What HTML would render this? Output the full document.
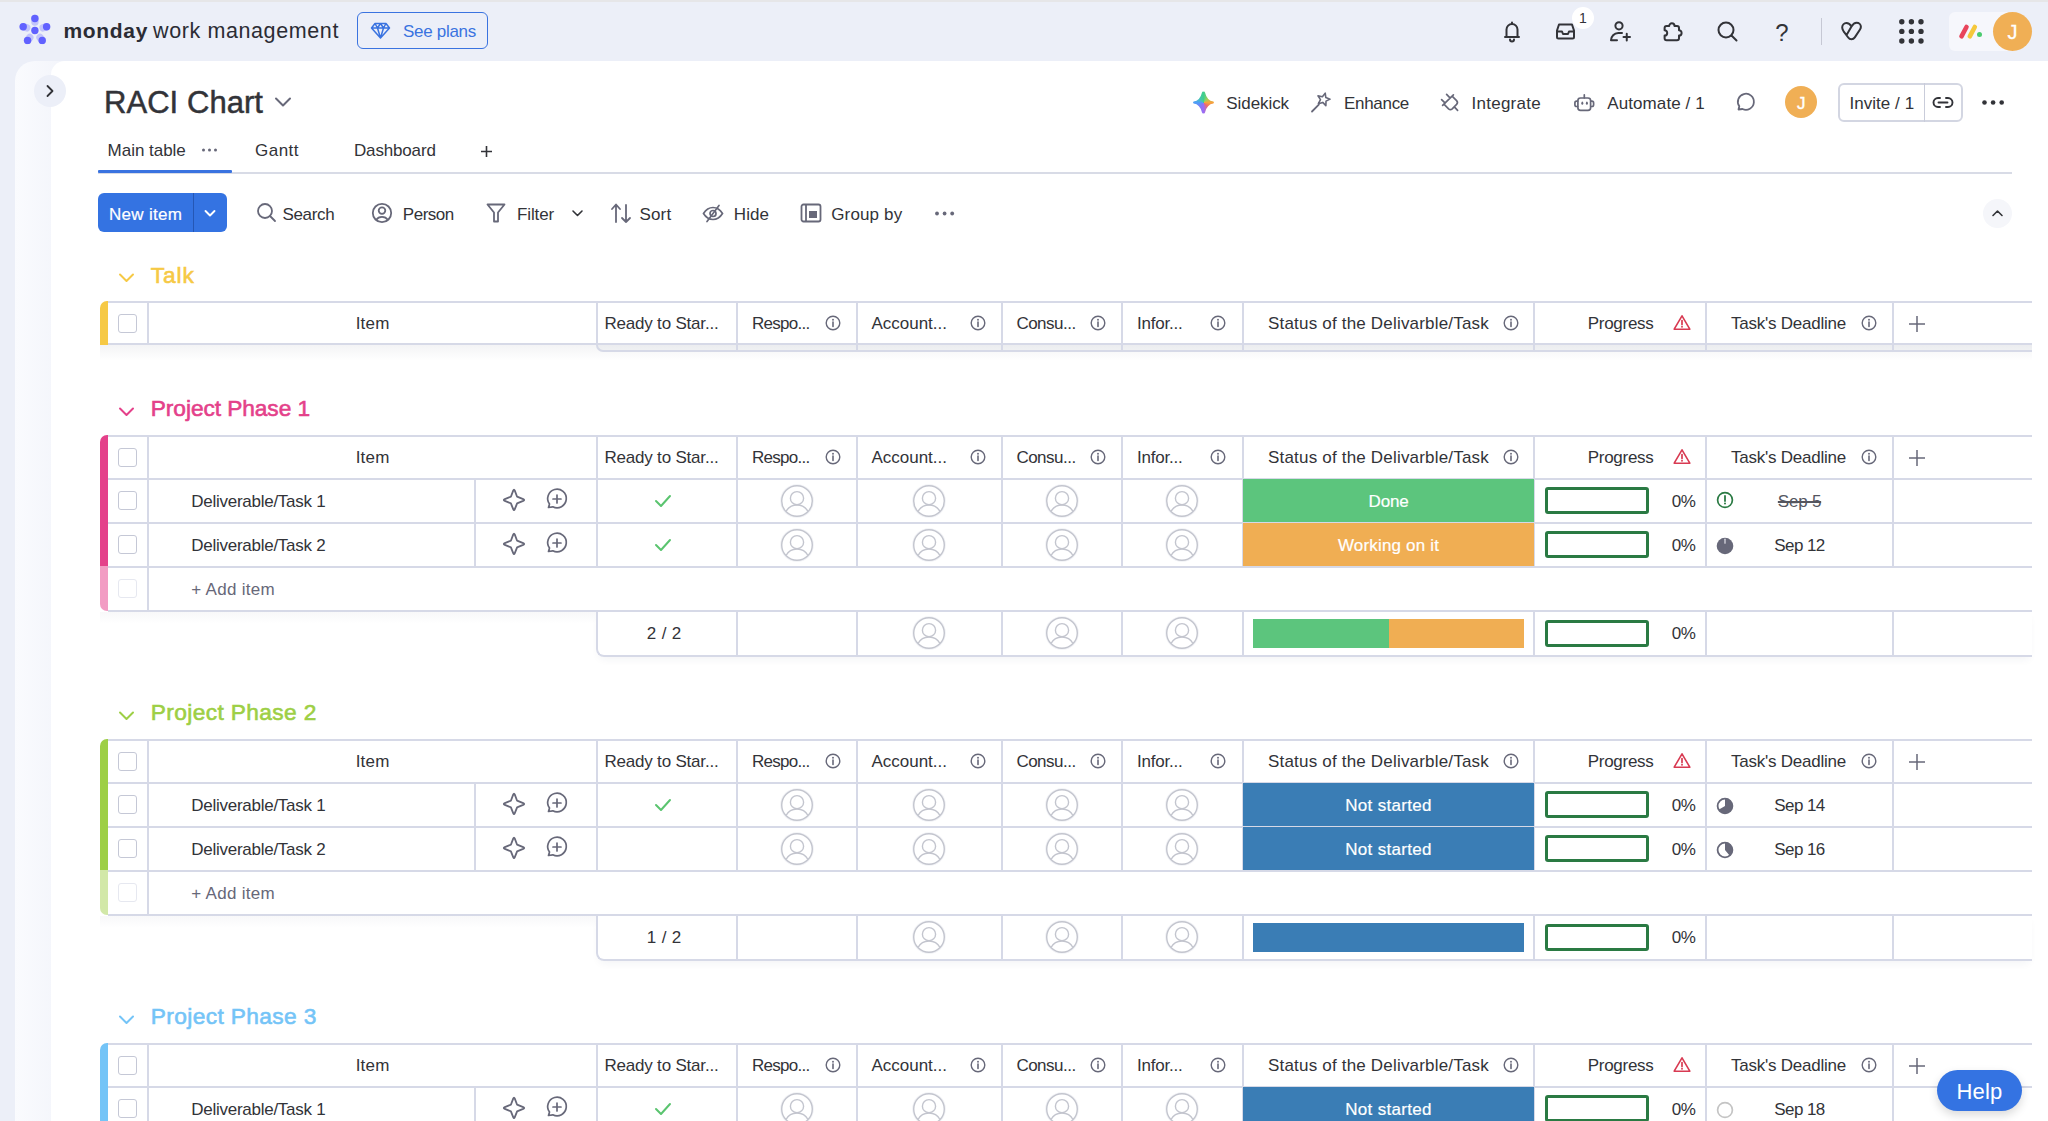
<!DOCTYPE html>
<html><head><meta charset="utf-8"><title>RACI Chart</title>
<style>
html,body{margin:0;padding:0}
body{width:2048px;height:1121px;overflow:hidden;position:relative;background:#ECEFF8;font-family:"Liberation Sans", sans-serif}
.a{position:absolute}
.t{position:absolute;white-space:pre;line-height:1}
svg.a{overflow:visible}
</style></head><body>
<div class="a" style="left:0px;top:0px;width:2048px;height:2px;background:#E6E6E8"></div>
<svg class="a" style="left:0;top:0" width="60" height="60" viewBox="0 0 60 60"><line x1="34.9" y1="18.5" x2="34.90" y2="22.10" stroke="#6161FF" stroke-opacity="0.3" stroke-width="7.4" stroke-linecap="round"/><line x1="23.2" y1="26.7" x2="26.71" y2="27.84" stroke="#6161FF" stroke-opacity="0.3" stroke-width="7.4" stroke-linecap="round"/><line x1="46.6" y1="26.7" x2="43.09" y2="27.84" stroke="#6161FF" stroke-opacity="0.3" stroke-width="7.4" stroke-linecap="round"/><line x1="27.6" y1="40.4" x2="29.79" y2="37.43" stroke="#6161FF" stroke-opacity="0.3" stroke-width="7.4" stroke-linecap="round"/><line x1="42.2" y1="40.4" x2="40.01" y2="37.43" stroke="#6161FF" stroke-opacity="0.3" stroke-width="7.4" stroke-linecap="round"/><circle cx="34.9" cy="18.5" r="3.7" fill="#6161FF"/><circle cx="23.2" cy="26.7" r="3.7" fill="#6161FF"/><circle cx="46.6" cy="26.7" r="3.7" fill="#6161FF"/><circle cx="27.6" cy="40.4" r="3.7" fill="#6161FF"/><circle cx="42.2" cy="40.4" r="3.7" fill="#6161FF"/><circle cx="34.9" cy="30.5" r="3.7" fill="#6161FF"/></svg>
<span class="t" style="left:63.50px;top:20.30px;font-size:21px;font-weight:700;color:#2B2C34;letter-spacing:0.664px;">monday</span>
<span class="t" style="left:153.00px;top:21.30px;font-size:21.5px;color:#2B2C34;letter-spacing:0.608px;">work management</span>
<div class="a" style="left:357px;top:12px;width:131px;height:37px;border:1.5px solid #3A73E0;border-radius:6px;box-sizing:border-box"></div>
<svg class="a" style="left:370px;top:21px;" width="21" height="19" viewBox="0 0 21 19" fill="none"><path d="M5 2.5h11l3.5 4.5L10.5 17 1.5 7z M1.5 7h18 M7.5 7l3 10 3-10 M5 2.5l2.5 4.5 3-4.5 3 4.5 2.5-4.5" stroke="#3A73E0" stroke-width="1.5" stroke-linejoin="round"/></svg>
<span class="t" style="left:403.00px;top:22.70px;font-size:17px;color:#3A73E0;letter-spacing:-0.292px;">See plans</span>
<svg class="a" style="left:1502px;top:20px;" width="20" height="22" viewBox="0 0 20 22" fill="none"><path d="M3 17h14M4.5 17V9.5a5.5 5.5 0 0 1 11 0V17M8 19.5a2 2 0 0 0 4 0M10 2.5v1.5" stroke="#323338" stroke-width="2" stroke-linecap="round" stroke-linejoin="round"/></svg>
<svg class="a" style="left:1554px;top:22px;" width="24" height="19" viewBox="0 0 24 19" fill="none"><path d="M3 8.5l2-6h13l2 6v6.5a1.5 1.5 0 0 1-1.5 1.5h-14A1.5 1.5 0 0 1 3 15z M3 9.5h5l1 2.5h5l1-2.5h5" stroke="#323338" stroke-width="2" stroke-linejoin="round"/></svg>
<div class="a" style="left:1572px;top:7px;width:22px;height:22px;background:#fff;border-radius:50%"></div>
<span class="t" style="left:1579.10px;top:11.00px;font-size:14px;color:#323338;">1</span>
<svg class="a" style="left:1608px;top:20px;" width="24" height="22" viewBox="0 0 24 22" fill="none"><circle cx="11" cy="5.8" r="3.6" stroke="#323338" stroke-width="2"/><path d="M14 13H10.2A7.3 7.3 0 0 0 3 20.3H9M15.5 17h6.5M18.75 13.8v6.6" stroke="#323338" stroke-width="2" stroke-linecap="round" stroke-linejoin="round"/></svg>
<svg class="a" style="left:1658px;top:16px;" width="30" height="30" viewBox="0 0 30 30" fill="none"><path d="M8.6 10H11.2A2.65 2.65 0 0 1 16.5 10H19Q21 10 21 12V14.3A2.6 2.6 0 0 1 21 19.5V22.3Q21 24.3 19 24.3H8.6Q6.6 24.3 6.6 22.3V19.5A2.6 2.6 0 0 0 6.6 14.3V12Q6.6 10 8.6 10Z" stroke="#323338" stroke-width="2" stroke-linejoin="round"/></svg>
<svg class="a" style="left:1716px;top:20px;" width="24" height="24" viewBox="0 0 24 24" fill="none"><circle cx="10" cy="10" r="7.5" stroke="#323338" stroke-width="2"/><path d="M15.5 15.5l5 5" stroke="#323338" stroke-width="2" stroke-linecap="round"/></svg>
<span class="t" style="left:1775.32px;top:20.50px;font-size:24px;color:#323338;">?</span>
<div class="a" style="left:1821px;top:18px;width:1px;height:27px;background:#C6C8D4"></div>
<svg class="a" style="left:1836px;top:16px;" width="30" height="30" viewBox="0 0 30 30" fill="none"><path d="M15.5 10.6C14 8 12.3 7 10.4 7 8 7 6.2 9 6.2 11.5 6.2 12.8 6.8 14 7.6 15.3L12.2 21.5C13 22.7 14.2 23.3 15.5 23.3 16.9 23.3 18 22.6 18.8 21.4L24 13.5C24.6 12.6 24.9 11.6 24.9 10.8 24.9 8.5 23 6.7 20.6 6.7 18.6 6.7 17 8 15.5 10.6L11 18.2" stroke="#323338" stroke-width="2" stroke-linecap="round" stroke-linejoin="round"/></svg>
<svg class="a" style="left:1899px;top:19px;" width="26" height="26" viewBox="0 0 26 26" fill="none"><circle cx="2.8" cy="2.8" r="2.7" fill="#323338"/><circle cx="2.8" cy="12.4" r="2.7" fill="#323338"/><circle cx="2.8" cy="22.0" r="2.7" fill="#323338"/><circle cx="12.4" cy="2.8" r="2.7" fill="#323338"/><circle cx="12.4" cy="12.4" r="2.7" fill="#323338"/><circle cx="12.4" cy="22.0" r="2.7" fill="#323338"/><circle cx="22.0" cy="2.8" r="2.7" fill="#323338"/><circle cx="22.0" cy="12.4" r="2.7" fill="#323338"/><circle cx="22.0" cy="22.0" r="2.7" fill="#323338"/></svg>
<div class="a" style="left:1949px;top:12px;width:70px;height:39px;background:#F6F7FC;border-radius:6px"></div>
<svg class="a" style="left:1957px;top:22px;" width="28" height="18" viewBox="0 0 28 18" fill="none"><path d="M4.5 14.3L9.5 5" stroke="#E8455C" stroke-width="4.6" stroke-linecap="round"/><path d="M12.8 14.3L17.8 5" stroke="#F5C83C" stroke-width="4.6" stroke-linecap="round"/><circle cx="22.5" cy="12.5" r="2.5" fill="#4ACB6E"/></svg>
<div class="a" style="left:1993px;top:12px;width:39px;height:39px;background:#F0AF55;border-radius:50%"></div>
<span class="t" style="left:2007.50px;top:21.50px;font-size:20px;color:#fff;-webkit-text-stroke:0.3px #fff;">J</span>
<div class="a" style="left:15px;top:61px;width:60px;height:1060px;background:linear-gradient(90deg,#FAFBFE,#F1F3FA);border-top-left-radius:20px"></div>
<div class="a" style="left:51px;top:61px;width:1997px;height:1060px;background:#fff;border-top-left-radius:14px"></div>
<div class="a" style="left:34px;top:75px;width:32px;height:32px;background:#ECEFF8;border-radius:50%"></div>
<svg class="a" style="left:44px;top:84px;" width="12" height="14" viewBox="0 0 12 14" fill="none"><path d="M3.5 2l5 5-5 5" stroke="#323338" stroke-width="1.8" stroke-linecap="round" stroke-linejoin="round"/></svg>
<span class="t" style="left:104.00px;top:86.80px;font-size:31px;color:#323338;letter-spacing:0.052px;-webkit-text-stroke:0.5px #323338;">RACI Chart</span>
<svg class="a" style="left:274px;top:96px;" width="18" height="12" viewBox="0 0 18 12" fill="none"><path d="M2 2.5l7 7 7-7" stroke="#676879" stroke-width="2" stroke-linecap="round" stroke-linejoin="round"/></svg>
<div class="a" style="left:1192px;top:91px;width:23px;height:23px;background:conic-gradient(from 0deg at 11.5px 11.5px,#3FCF8E 0deg,#9DD05A 45deg,#F5A33C 90deg,#EE6B6B 135deg,#9A6CF5 180deg,#7C7CF8 225deg,#4E9FF6 270deg,#45C6B0 315deg,#3FCF8E 360deg);clip-path:path('M11.5 0.8Q12.4 0.2 13 1.6Q15 9.8 21.4 10.6Q22.6 11.5 21.4 12.4Q15 13.2 13 21.4Q12.4 22.8 11.5 22.2Q10.6 22.8 10 21.4Q8 13.2 1.6 12.4Q0.4 11.5 1.6 10.6Q8 9.8 10 1.6Q10.6 0.2 11.5 0.8Z')"></div>
<span class="t" style="left:1226.30px;top:94.50px;font-size:17px;color:#323338;letter-spacing:-0.077px;">Sidekick</span>
<svg class="a" style="left:1310px;top:92px;" width="22" height="22" viewBox="0 0 22 22" fill="none"><path d="M2 19.5l6.8-6.8" stroke="#676879" stroke-width="1.8" stroke-linecap="round"/><path d="M15.21 1.12 L15.83 5.61 L20.09 7.15 L16.02 9.13 L15.87 13.66 L12.72 10.40 L8.37 11.65 L10.50 7.66 L7.96 3.91 L12.42 4.70Z" stroke="#676879" stroke-width="1.6" stroke-linejoin="round"/></svg>
<span class="t" style="left:1344.00px;top:94.50px;font-size:17px;color:#323338;letter-spacing:-0.304px;">Enhance</span>
<svg class="a" style="left:1436px;top:88px;" width="28" height="28" viewBox="0 0 28 28" fill="none"><path d="M6.6 17.4L17.4 6.8M10.6 6.4L14 9.9M5.6 11.6L9.2 15.2M16.6 8.6L20.6 12.6Q22.3 14.5 20.6 16.4L16.2 20.8Q14.4 22.5 12.6 20.8L8.4 16.6M18.6 19.2L21.6 22.3" stroke="#676879" stroke-width="1.7" stroke-linecap="round" stroke-linejoin="round"/></svg>
<span class="t" style="left:1471.50px;top:95.00px;font-size:17px;color:#323338;letter-spacing:0.255px;">Integrate</span>
<svg class="a" style="left:1570px;top:88px;" width="28" height="28" viewBox="0 0 28 28" fill="none"><rect x="7.9" y="10" width="12.7" height="12.3" rx="2.6" stroke="#676879" stroke-width="1.7"/><path d="M14.3 6.8v3M7.6 13.2H6.6Q4.9 13.2 4.9 15V16.8Q4.9 18.5 6.6 18.5H7.6M20.9 13.2H21.9Q23.6 13.2 23.6 15V16.8Q23.6 18.5 21.9 18.5H20.9" stroke="#676879" stroke-width="1.7" stroke-linecap="round"/><ellipse cx="12.3" cy="15.2" rx="1" ry="1.6" fill="#676879"/><ellipse cx="16.9" cy="15.2" rx="1" ry="1.6" fill="#676879"/></svg>
<span class="t" style="left:1607.30px;top:95.00px;font-size:17px;color:#323338;letter-spacing:0.084px;">Automate / 1</span>
<svg class="a" style="left:1734px;top:92px;" width="22" height="20" viewBox="0 0 22 20" fill="none"><path d="M4.5 17.5l.8-3.2A8 8 0 1 1 8.5 17z" stroke="#676879" stroke-width="1.8" stroke-linejoin="round"/></svg>
<div class="a" style="left:1785px;top:86px;width:32px;height:32px;background:#F0AF55;border-radius:50%"></div>
<span class="t" style="left:1796.95px;top:94.80px;font-size:17px;color:#fff;-webkit-text-stroke:0.4px #fff;">J</span>
<div class="a" style="left:1838px;top:83px;width:125px;height:39px;border:2px solid #D3D6E2;border-radius:6px;box-sizing:border-box"></div>
<div class="a" style="left:1924px;top:83px;width:1px;height:39px;background:#C9CCDA"></div>
<span class="t" style="left:1849.40px;top:95.00px;font-size:17px;color:#323338;letter-spacing:0.053px;">Invite / 1</span>
<svg class="a" style="left:1932px;top:93px;" width="22" height="19" viewBox="0 0 22 19" fill="none"><path d="M8 5H6a4.5 4.5 0 0 0 0 9h2M14 5h2a4.5 4.5 0 0 1 0 9h-2M6.5 9.5h9" stroke="#323338" stroke-width="1.9" stroke-linecap="round"/></svg>
<svg class="a" style="left:1981px;top:98px;" width="26" height="9" viewBox="0 0 26 9" fill="none"><circle cx="3.5" cy="4.5" r="2.3" fill="#323338"/><circle cx="12.1" cy="4.5" r="2.3" fill="#323338"/><circle cx="20.7" cy="4.5" r="2.3" fill="#323338"/></svg>
<span class="t" style="left:107.60px;top:141.80px;font-size:17px;color:#323338;letter-spacing:-0.024px;">Main table</span>
<svg class="a" style="left:201px;top:145.5px;" width="18" height="8" viewBox="0 0 18 8" fill="none"><circle cx="2.5" cy="4" r="1.5" fill="#676879"/><circle cx="8.5" cy="4" r="1.5" fill="#676879"/><circle cx="14.5" cy="4" r="1.5" fill="#676879"/></svg>
<span class="t" style="left:255.00px;top:141.80px;font-size:17px;color:#323338;letter-spacing:0.481px;">Gantt</span>
<span class="t" style="left:354.00px;top:141.80px;font-size:17px;color:#323338;letter-spacing:-0.164px;">Dashboard</span>
<svg class="a" style="left:479px;top:144px;" width="15" height="15" viewBox="0 0 15 15" fill="none"><path d="M7.5 2v11M2 7.5h11" stroke="#323338" stroke-width="1.6"/></svg>
<div class="a" style="left:98px;top:172px;width:1914px;height:2px;background:#D8DBE6"></div>
<div class="a" style="left:98px;top:170px;width:134px;height:3px;background:#3A73E0;border-radius:1px"></div>
<div class="a" style="left:98px;top:193px;width:129px;height:39px;background:#3473E2;border-radius:6px"></div>
<div class="a" style="left:193px;top:193px;width:1px;height:39px;background:#2557B5"></div>
<span class="t" style="left:109.00px;top:205.50px;font-size:17px;color:#fff;letter-spacing:0.305px;-webkit-text-stroke:0.2px #fff;">New item</span>
<svg class="a" style="left:203px;top:208px;" width="14" height="11" viewBox="0 0 14 11" fill="none"><path d="M2.5 3l4.5 4.5 4.5-4.5" stroke="#fff" stroke-width="1.9" stroke-linecap="round" stroke-linejoin="round"/></svg>
<svg class="a" style="left:256px;top:202px;" width="22" height="22" viewBox="0 0 22 22" fill="none"><circle cx="9" cy="9" r="7" stroke="#676879" stroke-width="1.8"/><path d="M14 14l5 5" stroke="#676879" stroke-width="1.8" stroke-linecap="round"/></svg>
<span class="t" style="left:282.40px;top:205.50px;font-size:17px;color:#323338;letter-spacing:-0.312px;">Search</span>
<svg class="a" style="left:371px;top:202px;" width="22" height="22" viewBox="0 0 22 22" fill="none"><circle cx="11" cy="11" r="9.2" stroke="#676879" stroke-width="1.8"/><circle cx="11" cy="8.6" r="3.3" stroke="#676879" stroke-width="1.8"/><path d="M5.2 17.8c1.3-2 3.3-3 5.8-3s4.5 1 5.8 3" stroke="#676879" stroke-width="1.8"/></svg>
<span class="t" style="left:402.80px;top:205.50px;font-size:17px;color:#323338;letter-spacing:-0.479px;">Person</span>
<svg class="a" style="left:485px;top:202px;" width="22" height="22" viewBox="0 0 22 22" fill="none"><path d="M2.5 2.5h17l-6.5 8v9h-4v-9z" stroke="#676879" stroke-width="1.8" stroke-linejoin="round"/></svg>
<span class="t" style="left:517.00px;top:205.50px;font-size:17px;color:#323338;letter-spacing:-0.130px;">Filter</span>
<svg class="a" style="left:571px;top:208px;" width="13" height="11" viewBox="0 0 13 11" fill="none"><path d="M2 3l4.5 4.5L11 3" stroke="#323338" stroke-width="1.6" stroke-linecap="round" stroke-linejoin="round"/></svg>
<svg class="a" style="left:610px;top:202px;" width="22" height="22" viewBox="0 0 22 22" fill="none"><path d="M6 20V3M2 7l4-4.5L10 7M16 3v17M12 16l4 4 4-4" stroke="#676879" stroke-width="1.8" stroke-linecap="round" stroke-linejoin="round"/></svg>
<span class="t" style="left:639.50px;top:205.50px;font-size:17px;color:#323338;letter-spacing:0.153px;">Sort</span>
<svg class="a" style="left:702px;top:202px;" width="22" height="22" viewBox="0 0 22 22" fill="none"><path d="M1.5 11.5c2.5-4 5.5-6 9.5-6s7 2 9.5 6c-2.5 4-5.5 6-9.5 6s-7-2-9.5-6z" stroke="#676879" stroke-width="1.7"/><circle cx="11" cy="11.5" r="3" stroke="#676879" stroke-width="1.7"/><path d="M5 19.5L17 3.5" stroke="#676879" stroke-width="1.7" stroke-linecap="round"/></svg>
<span class="t" style="left:733.80px;top:205.50px;font-size:17px;color:#323338;letter-spacing:0.083px;">Hide</span>
<svg class="a" style="left:800px;top:203px;" width="22" height="20" viewBox="0 0 22 20" fill="none"><rect x="1.5" y="1.5" width="19" height="17" rx="2" stroke="#676879" stroke-width="1.8"/><path d="M6 2v16" stroke="#676879" stroke-width="1.8"/><rect x="9" y="8" width="8" height="7" fill="#676879"/></svg>
<span class="t" style="left:831.20px;top:205.50px;font-size:17px;color:#323338;letter-spacing:0.158px;">Group by</span>
<svg class="a" style="left:934px;top:209px;" width="22" height="9" viewBox="0 0 22 9" fill="none"><circle cx="3.0" cy="4.5" r="1.9" fill="#676879"/><circle cx="10.6" cy="4.5" r="1.9" fill="#676879"/><circle cx="18.2" cy="4.5" r="1.9" fill="#676879"/></svg>
<div class="a" style="left:1983px;top:199px;width:29px;height:29px;background:#F5F6FA;border-radius:50%"></div>
<svg class="a" style="left:1990px;top:206px;" width="15" height="15" viewBox="0 0 15 15" fill="none"><path d="M3 9.5l4.5-4.5 4.5 4.5" stroke="#323338" stroke-width="1.6" stroke-linecap="round" stroke-linejoin="round"/></svg>
<svg class="a" style="left:118px;top:272.3px;" width="17" height="12" viewBox="0 0 17 12" fill="none"><path d="M2 2.5l6.5 6.5 6.5-6.5" stroke="#F6C945" stroke-width="2" stroke-linecap="round" stroke-linejoin="round"/></svg>
<span class="t" style="left:150.80px;top:263.80px;font-size:22.7px;color:#F6C945;letter-spacing:0.910px;-webkit-text-stroke:0.6px #F6C945;">Talk</span>
<div class="a" style="left:100px;top:345px;width:1932px;height:16px;background:linear-gradient(180deg,rgba(60,65,90,0.06),rgba(60,65,90,0))"></div>
<div class="a" style="left:596px;top:343px;width:1436px;height:9px;border-left:2px solid #D6D9E7;border-bottom:2px solid #D6D9E7;border-bottom-left-radius:7px;box-sizing:border-box;background:rgba(60,65,90,0.04)"></div>
<div class="a" style="left:736px;top:345px;width:2px;height:6px;background:#D6D9E7"></div>
<div class="a" style="left:856px;top:345px;width:2px;height:6px;background:#D6D9E7"></div>
<div class="a" style="left:1001px;top:345px;width:2px;height:6px;background:#D6D9E7"></div>
<div class="a" style="left:1121px;top:345px;width:2px;height:6px;background:#D6D9E7"></div>
<div class="a" style="left:1242px;top:345px;width:2px;height:6px;background:#D6D9E7"></div>
<div class="a" style="left:1533px;top:345px;width:2px;height:6px;background:#D6D9E7"></div>
<div class="a" style="left:1705px;top:345px;width:2px;height:6px;background:#D6D9E7"></div>
<div class="a" style="left:1892px;top:345px;width:2px;height:6px;background:#D6D9E7"></div>
<div class="a" style="left:108px;top:301px;width:1924px;height:2px;background:#D6D9E7"></div>
<div class="a" style="left:108px;top:343px;width:1924px;height:2px;background:#D6D9E7"></div>
<div class="a" style="left:147px;top:301px;width:2px;height:44px;background:#D6D9E7"></div>
<div class="a" style="left:596px;top:301px;width:2px;height:44px;background:#D6D9E7"></div>
<div class="a" style="left:736px;top:301px;width:2px;height:44px;background:#D6D9E7"></div>
<div class="a" style="left:856px;top:301px;width:2px;height:44px;background:#D6D9E7"></div>
<div class="a" style="left:1001px;top:301px;width:2px;height:44px;background:#D6D9E7"></div>
<div class="a" style="left:1121px;top:301px;width:2px;height:44px;background:#D6D9E7"></div>
<div class="a" style="left:1242px;top:301px;width:2px;height:44px;background:#D6D9E7"></div>
<div class="a" style="left:1533px;top:301px;width:2px;height:44px;background:#D6D9E7"></div>
<div class="a" style="left:1705px;top:301px;width:2px;height:44px;background:#D6D9E7"></div>
<div class="a" style="left:1892px;top:301px;width:2px;height:44px;background:#D6D9E7"></div>
<div class="a" style="left:100px;top:301px;width:8px;height:44px;background:#F6C945;border-top-left-radius:7px"></div>
<div class="a" style="left:118px;top:313.5px;width:19px;height:19px;border:1.5px solid #C5C8D6;border-radius:3px;box-sizing:border-box"></div>
<span class="t" style="left:355.70px;top:315.00px;font-size:17px;color:#323338;letter-spacing:0.184px;">Item</span>
<span class="t" style="left:604.40px;top:315.00px;font-size:17px;color:#323338;letter-spacing:-0.193px;">Ready to Star...</span>
<span class="t" style="left:752.00px;top:315.00px;font-size:17px;color:#323338;letter-spacing:-0.739px;">Respo...</span>
<svg class="a" style="left:825px;top:314.5px;" width="16" height="16" viewBox="0 0 16 16" fill="none"><circle cx="8" cy="8" r="6.8" stroke="#676879" stroke-width="1.4"/><path d="M8 7v4.5" stroke="#676879" stroke-width="1.6" stroke-linecap="round"/><circle cx="8" cy="4.8" r="0.95" fill="#676879"/></svg>
<span class="t" style="left:871.50px;top:315.00px;font-size:17px;color:#323338;letter-spacing:-0.021px;">Account...</span>
<svg class="a" style="left:970px;top:314.5px;" width="16" height="16" viewBox="0 0 16 16" fill="none"><circle cx="8" cy="8" r="6.8" stroke="#676879" stroke-width="1.4"/><path d="M8 7v4.5" stroke="#676879" stroke-width="1.6" stroke-linecap="round"/><circle cx="8" cy="4.8" r="0.95" fill="#676879"/></svg>
<span class="t" style="left:1016.40px;top:315.00px;font-size:17px;color:#323338;letter-spacing:-0.502px;">Consu...</span>
<svg class="a" style="left:1090.4px;top:314.5px;" width="16" height="16" viewBox="0 0 16 16" fill="none"><circle cx="8" cy="8" r="6.8" stroke="#676879" stroke-width="1.4"/><path d="M8 7v4.5" stroke="#676879" stroke-width="1.6" stroke-linecap="round"/><circle cx="8" cy="4.8" r="0.95" fill="#676879"/></svg>
<span class="t" style="left:1137.00px;top:315.00px;font-size:17px;color:#323338;letter-spacing:-0.219px;">Infor...</span>
<svg class="a" style="left:1210px;top:314.5px;" width="16" height="16" viewBox="0 0 16 16" fill="none"><circle cx="8" cy="8" r="6.8" stroke="#676879" stroke-width="1.4"/><path d="M8 7v4.5" stroke="#676879" stroke-width="1.6" stroke-linecap="round"/><circle cx="8" cy="4.8" r="0.95" fill="#676879"/></svg>
<span class="t" style="left:1268.00px;top:315.00px;font-size:17px;color:#323338;letter-spacing:0.191px;">Status of the Delivarble/Task</span>
<svg class="a" style="left:1502.5px;top:314.5px;" width="16" height="16" viewBox="0 0 16 16" fill="none"><circle cx="8" cy="8" r="6.8" stroke="#676879" stroke-width="1.4"/><path d="M8 7v4.5" stroke="#676879" stroke-width="1.6" stroke-linecap="round"/><circle cx="8" cy="4.8" r="0.95" fill="#676879"/></svg>
<span class="t" style="left:1587.70px;top:315.00px;font-size:17px;color:#323338;letter-spacing:-0.266px;">Progress</span>
<svg class="a" style="left:1673.3px;top:314.0px;" width="18" height="17" viewBox="0 0 18 17" fill="none"><path d="M9 1.8L16.8 15.2H1.2z" stroke="#D83A52" stroke-width="1.6" stroke-linejoin="round"/><path d="M9 6.5v4" stroke="#D83A52" stroke-width="1.7" stroke-linecap="round"/><circle cx="9" cy="12.8" r="0.95" fill="#D83A52"/></svg>
<span class="t" style="left:1731.00px;top:315.00px;font-size:17px;color:#323338;letter-spacing:-0.235px;">Task's Deadline</span>
<svg class="a" style="left:1860.6px;top:314.5px;" width="16" height="16" viewBox="0 0 16 16" fill="none"><circle cx="8" cy="8" r="6.8" stroke="#676879" stroke-width="1.4"/><path d="M8 7v4.5" stroke="#676879" stroke-width="1.6" stroke-linecap="round"/><circle cx="8" cy="4.8" r="0.95" fill="#676879"/></svg>
<svg class="a" style="left:1907.6px;top:314.5px;" width="18" height="18" viewBox="0 0 18 18" fill="none"><path d="M9 1v16M1 9h16" stroke="#676879" stroke-width="1.5"/></svg>
<svg class="a" style="left:118px;top:405.8px;" width="17" height="12" viewBox="0 0 17 12" fill="none"><path d="M2 2.5l6.5 6.5 6.5-6.5" stroke="#E4418A" stroke-width="2" stroke-linecap="round" stroke-linejoin="round"/></svg>
<span class="t" style="left:150.80px;top:397.30px;font-size:22.7px;color:#E4418A;letter-spacing:-0.065px;-webkit-text-stroke:0.6px #E4418A;">Project Phase 1</span>
<div class="a" style="left:108px;top:435px;width:1924px;height:2px;background:#D6D9E7"></div>
<div class="a" style="left:108px;top:478px;width:1924px;height:2px;background:#D6D9E7"></div>
<div class="a" style="left:147px;top:435px;width:2px;height:45px;background:#D6D9E7"></div>
<div class="a" style="left:596px;top:435px;width:2px;height:45px;background:#D6D9E7"></div>
<div class="a" style="left:736px;top:435px;width:2px;height:45px;background:#D6D9E7"></div>
<div class="a" style="left:856px;top:435px;width:2px;height:45px;background:#D6D9E7"></div>
<div class="a" style="left:1001px;top:435px;width:2px;height:45px;background:#D6D9E7"></div>
<div class="a" style="left:1121px;top:435px;width:2px;height:45px;background:#D6D9E7"></div>
<div class="a" style="left:1242px;top:435px;width:2px;height:45px;background:#D6D9E7"></div>
<div class="a" style="left:1533px;top:435px;width:2px;height:45px;background:#D6D9E7"></div>
<div class="a" style="left:1705px;top:435px;width:2px;height:45px;background:#D6D9E7"></div>
<div class="a" style="left:1892px;top:435px;width:2px;height:45px;background:#D6D9E7"></div>
<div class="a" style="left:100px;top:435px;width:8px;height:45px;background:#E4418A;border-top-left-radius:7px"></div>
<div class="a" style="left:118px;top:447.5px;width:19px;height:19px;border:1.5px solid #C5C8D6;border-radius:3px;box-sizing:border-box"></div>
<span class="t" style="left:355.70px;top:449.00px;font-size:17px;color:#323338;letter-spacing:0.184px;">Item</span>
<span class="t" style="left:604.40px;top:449.00px;font-size:17px;color:#323338;letter-spacing:-0.193px;">Ready to Star...</span>
<span class="t" style="left:752.00px;top:449.00px;font-size:17px;color:#323338;letter-spacing:-0.739px;">Respo...</span>
<svg class="a" style="left:825px;top:448.5px;" width="16" height="16" viewBox="0 0 16 16" fill="none"><circle cx="8" cy="8" r="6.8" stroke="#676879" stroke-width="1.4"/><path d="M8 7v4.5" stroke="#676879" stroke-width="1.6" stroke-linecap="round"/><circle cx="8" cy="4.8" r="0.95" fill="#676879"/></svg>
<span class="t" style="left:871.50px;top:449.00px;font-size:17px;color:#323338;letter-spacing:-0.021px;">Account...</span>
<svg class="a" style="left:970px;top:448.5px;" width="16" height="16" viewBox="0 0 16 16" fill="none"><circle cx="8" cy="8" r="6.8" stroke="#676879" stroke-width="1.4"/><path d="M8 7v4.5" stroke="#676879" stroke-width="1.6" stroke-linecap="round"/><circle cx="8" cy="4.8" r="0.95" fill="#676879"/></svg>
<span class="t" style="left:1016.40px;top:449.00px;font-size:17px;color:#323338;letter-spacing:-0.502px;">Consu...</span>
<svg class="a" style="left:1090.4px;top:448.5px;" width="16" height="16" viewBox="0 0 16 16" fill="none"><circle cx="8" cy="8" r="6.8" stroke="#676879" stroke-width="1.4"/><path d="M8 7v4.5" stroke="#676879" stroke-width="1.6" stroke-linecap="round"/><circle cx="8" cy="4.8" r="0.95" fill="#676879"/></svg>
<span class="t" style="left:1137.00px;top:449.00px;font-size:17px;color:#323338;letter-spacing:-0.219px;">Infor...</span>
<svg class="a" style="left:1210px;top:448.5px;" width="16" height="16" viewBox="0 0 16 16" fill="none"><circle cx="8" cy="8" r="6.8" stroke="#676879" stroke-width="1.4"/><path d="M8 7v4.5" stroke="#676879" stroke-width="1.6" stroke-linecap="round"/><circle cx="8" cy="4.8" r="0.95" fill="#676879"/></svg>
<span class="t" style="left:1268.00px;top:449.00px;font-size:17px;color:#323338;letter-spacing:0.191px;">Status of the Delivarble/Task</span>
<svg class="a" style="left:1502.5px;top:448.5px;" width="16" height="16" viewBox="0 0 16 16" fill="none"><circle cx="8" cy="8" r="6.8" stroke="#676879" stroke-width="1.4"/><path d="M8 7v4.5" stroke="#676879" stroke-width="1.6" stroke-linecap="round"/><circle cx="8" cy="4.8" r="0.95" fill="#676879"/></svg>
<span class="t" style="left:1587.70px;top:449.00px;font-size:17px;color:#323338;letter-spacing:-0.266px;">Progress</span>
<svg class="a" style="left:1673.3px;top:448.0px;" width="18" height="17" viewBox="0 0 18 17" fill="none"><path d="M9 1.8L16.8 15.2H1.2z" stroke="#D83A52" stroke-width="1.6" stroke-linejoin="round"/><path d="M9 6.5v4" stroke="#D83A52" stroke-width="1.7" stroke-linecap="round"/><circle cx="9" cy="12.8" r="0.95" fill="#D83A52"/></svg>
<span class="t" style="left:1731.00px;top:449.00px;font-size:17px;color:#323338;letter-spacing:-0.235px;">Task's Deadline</span>
<svg class="a" style="left:1860.6px;top:448.5px;" width="16" height="16" viewBox="0 0 16 16" fill="none"><circle cx="8" cy="8" r="6.8" stroke="#676879" stroke-width="1.4"/><path d="M8 7v4.5" stroke="#676879" stroke-width="1.6" stroke-linecap="round"/><circle cx="8" cy="4.8" r="0.95" fill="#676879"/></svg>
<svg class="a" style="left:1907.6px;top:448.5px;" width="18" height="18" viewBox="0 0 18 18" fill="none"><path d="M9 1v16M1 9h16" stroke="#676879" stroke-width="1.5"/></svg>
<div class="a" style="left:108px;top:522px;width:1924px;height:2px;background:#D6D9E7"></div>
<div class="a" style="left:147px;top:478px;width:2px;height:46px;background:#D6D9E7"></div>
<div class="a" style="left:474px;top:478px;width:2px;height:46px;background:#D6D9E7"></div>
<div class="a" style="left:596px;top:478px;width:2px;height:46px;background:#D6D9E7"></div>
<div class="a" style="left:736px;top:478px;width:2px;height:46px;background:#D6D9E7"></div>
<div class="a" style="left:856px;top:478px;width:2px;height:46px;background:#D6D9E7"></div>
<div class="a" style="left:1001px;top:478px;width:2px;height:46px;background:#D6D9E7"></div>
<div class="a" style="left:1121px;top:478px;width:2px;height:46px;background:#D6D9E7"></div>
<div class="a" style="left:1242px;top:478px;width:2px;height:46px;background:#D6D9E7"></div>
<div class="a" style="left:1533px;top:478px;width:2px;height:46px;background:#D6D9E7"></div>
<div class="a" style="left:1705px;top:478px;width:2px;height:46px;background:#D6D9E7"></div>
<div class="a" style="left:1892px;top:478px;width:2px;height:46px;background:#D6D9E7"></div>
<div class="a" style="left:100px;top:478px;width:8px;height:44px;background:#E4418A"></div>
<div class="a" style="left:118px;top:491px;width:19px;height:19px;border:1.5px solid #C5C8D6;border-radius:3px;box-sizing:border-box"></div>
<span class="t" style="left:191.30px;top:493.00px;font-size:17px;color:#323338;letter-spacing:-0.267px;">Deliverable/Task 1</span>
<svg class="a" style="left:502.20000000000005px;top:487.5px;" width="24" height="24" viewBox="0 0 24 24" fill="none"><path d="M11.2 2.6Q12 0.6 12.8 2.6L15.1 8.7 21.2 11.2Q23.2 12 21.2 12.8L15.1 15.3 12.8 21.2Q12 23.2 11.2 21.2L8.9 15.3 2.8 12.8Q0.8 12 2.8 11.2L8.9 8.7Z" stroke="#676879" stroke-width="1.8" stroke-linejoin="round"/></svg>
<svg class="a" style="left:544.4px;top:487.2px;" width="24" height="24" viewBox="0 0 24 24" fill="none"><path d="M4.5 20.5l1-3.5a9.3 9.3 0 1 1 3.3 2.8z" stroke="#676879" stroke-width="1.7" stroke-linejoin="round"/><path d="M13 8v8M9 12h8" stroke="#676879" stroke-width="1.7" stroke-linecap="round"/></svg>
<svg class="a" style="left:654px;top:493.5px;" width="18" height="14" viewBox="0 0 18 14" fill="none"><path d="M2 7l5 5L16 2" stroke="#5AC46F" stroke-width="2" stroke-linecap="round" stroke-linejoin="round"/></svg>
<svg class="a" style="left:779.9px;top:483.5px;" width="34" height="34" viewBox="0 0 34 34" fill="none"><circle cx="17" cy="17" r="16.2" fill="#fff" stroke="#F0F1F5" stroke-width="1.2"/><circle cx="17" cy="17" r="15.3" stroke="#C3C5CE" stroke-width="1.4"/><circle cx="17" cy="14.2" r="6.6" stroke="#C3C5CE" stroke-width="1.4"/><path d="M6 27.5C8.3 23.2 12.4 21 17 21s8.7 2.2 11 6.5" stroke="#C3C5CE" stroke-width="1.4"/></svg>
<svg class="a" style="left:912.4px;top:483.5px;" width="34" height="34" viewBox="0 0 34 34" fill="none"><circle cx="17" cy="17" r="16.2" fill="#fff" stroke="#F0F1F5" stroke-width="1.2"/><circle cx="17" cy="17" r="15.3" stroke="#C3C5CE" stroke-width="1.4"/><circle cx="17" cy="14.2" r="6.6" stroke="#C3C5CE" stroke-width="1.4"/><path d="M6 27.5C8.3 23.2 12.4 21 17 21s8.7 2.2 11 6.5" stroke="#C3C5CE" stroke-width="1.4"/></svg>
<svg class="a" style="left:1044.8px;top:483.5px;" width="34" height="34" viewBox="0 0 34 34" fill="none"><circle cx="17" cy="17" r="16.2" fill="#fff" stroke="#F0F1F5" stroke-width="1.2"/><circle cx="17" cy="17" r="15.3" stroke="#C3C5CE" stroke-width="1.4"/><circle cx="17" cy="14.2" r="6.6" stroke="#C3C5CE" stroke-width="1.4"/><path d="M6 27.5C8.3 23.2 12.4 21 17 21s8.7 2.2 11 6.5" stroke="#C3C5CE" stroke-width="1.4"/></svg>
<svg class="a" style="left:1165px;top:483.5px;" width="34" height="34" viewBox="0 0 34 34" fill="none"><circle cx="17" cy="17" r="16.2" fill="#fff" stroke="#F0F1F5" stroke-width="1.2"/><circle cx="17" cy="17" r="15.3" stroke="#C3C5CE" stroke-width="1.4"/><circle cx="17" cy="14.2" r="6.6" stroke="#C3C5CE" stroke-width="1.4"/><path d="M6 27.5C8.3 23.2 12.4 21 17 21s8.7 2.2 11 6.5" stroke="#C3C5CE" stroke-width="1.4"/></svg>
<div class="a" style="left:1243px;top:479px;width:291px;height:43px;background:#5CC57D"></div>
<span class="t" style="left:1368.60px;top:493.00px;font-size:17px;color:#fff;letter-spacing:-0.210px;-webkit-text-stroke:0.2px #fff;">Done</span>
<div class="a" style="left:1545px;top:487px;width:104px;height:27px;border:3px solid #2A7A43;border-radius:3px;box-sizing:border-box"></div>
<span class="t" style="left:1671.80px;top:493.00px;font-size:17px;color:#323338;letter-spacing:-0.589px;">0%</span>
<svg class="a" style="left:1715.2px;top:490.4px;" width="20" height="20" viewBox="0 0 20 20" fill="none"><circle cx="10" cy="10" r="7.4" stroke="#2A7A43" stroke-width="1.7"/><path d="M10 6v5" stroke="#2A7A43" stroke-width="1.8" stroke-linecap="round"/><circle cx="10" cy="13.6" r="1" fill="#2A7A43"/></svg>
<span class="t" style="left:1777.85px;top:493.00px;font-size:17px;color:#55565F;letter-spacing:-0.228px;text-decoration:line-through;text-decoration-thickness:1.5px;">Sep 5</span>
<div class="a" style="left:108px;top:566px;width:1924px;height:2px;background:#D6D9E7"></div>
<div class="a" style="left:147px;top:522px;width:2px;height:46px;background:#D6D9E7"></div>
<div class="a" style="left:474px;top:522px;width:2px;height:46px;background:#D6D9E7"></div>
<div class="a" style="left:596px;top:522px;width:2px;height:46px;background:#D6D9E7"></div>
<div class="a" style="left:736px;top:522px;width:2px;height:46px;background:#D6D9E7"></div>
<div class="a" style="left:856px;top:522px;width:2px;height:46px;background:#D6D9E7"></div>
<div class="a" style="left:1001px;top:522px;width:2px;height:46px;background:#D6D9E7"></div>
<div class="a" style="left:1121px;top:522px;width:2px;height:46px;background:#D6D9E7"></div>
<div class="a" style="left:1242px;top:522px;width:2px;height:46px;background:#D6D9E7"></div>
<div class="a" style="left:1533px;top:522px;width:2px;height:46px;background:#D6D9E7"></div>
<div class="a" style="left:1705px;top:522px;width:2px;height:46px;background:#D6D9E7"></div>
<div class="a" style="left:1892px;top:522px;width:2px;height:46px;background:#D6D9E7"></div>
<div class="a" style="left:100px;top:522px;width:8px;height:44px;background:#E4418A"></div>
<div class="a" style="left:118px;top:535px;width:19px;height:19px;border:1.5px solid #C5C8D6;border-radius:3px;box-sizing:border-box"></div>
<span class="t" style="left:191.30px;top:537.00px;font-size:17px;color:#323338;letter-spacing:-0.267px;">Deliverable/Task 2</span>
<svg class="a" style="left:502.20000000000005px;top:531.5px;" width="24" height="24" viewBox="0 0 24 24" fill="none"><path d="M11.2 2.6Q12 0.6 12.8 2.6L15.1 8.7 21.2 11.2Q23.2 12 21.2 12.8L15.1 15.3 12.8 21.2Q12 23.2 11.2 21.2L8.9 15.3 2.8 12.8Q0.8 12 2.8 11.2L8.9 8.7Z" stroke="#676879" stroke-width="1.8" stroke-linejoin="round"/></svg>
<svg class="a" style="left:544.4px;top:531.2px;" width="24" height="24" viewBox="0 0 24 24" fill="none"><path d="M4.5 20.5l1-3.5a9.3 9.3 0 1 1 3.3 2.8z" stroke="#676879" stroke-width="1.7" stroke-linejoin="round"/><path d="M13 8v8M9 12h8" stroke="#676879" stroke-width="1.7" stroke-linecap="round"/></svg>
<svg class="a" style="left:654px;top:537.5px;" width="18" height="14" viewBox="0 0 18 14" fill="none"><path d="M2 7l5 5L16 2" stroke="#5AC46F" stroke-width="2" stroke-linecap="round" stroke-linejoin="round"/></svg>
<svg class="a" style="left:779.9px;top:527.5px;" width="34" height="34" viewBox="0 0 34 34" fill="none"><circle cx="17" cy="17" r="16.2" fill="#fff" stroke="#F0F1F5" stroke-width="1.2"/><circle cx="17" cy="17" r="15.3" stroke="#C3C5CE" stroke-width="1.4"/><circle cx="17" cy="14.2" r="6.6" stroke="#C3C5CE" stroke-width="1.4"/><path d="M6 27.5C8.3 23.2 12.4 21 17 21s8.7 2.2 11 6.5" stroke="#C3C5CE" stroke-width="1.4"/></svg>
<svg class="a" style="left:912.4px;top:527.5px;" width="34" height="34" viewBox="0 0 34 34" fill="none"><circle cx="17" cy="17" r="16.2" fill="#fff" stroke="#F0F1F5" stroke-width="1.2"/><circle cx="17" cy="17" r="15.3" stroke="#C3C5CE" stroke-width="1.4"/><circle cx="17" cy="14.2" r="6.6" stroke="#C3C5CE" stroke-width="1.4"/><path d="M6 27.5C8.3 23.2 12.4 21 17 21s8.7 2.2 11 6.5" stroke="#C3C5CE" stroke-width="1.4"/></svg>
<svg class="a" style="left:1044.8px;top:527.5px;" width="34" height="34" viewBox="0 0 34 34" fill="none"><circle cx="17" cy="17" r="16.2" fill="#fff" stroke="#F0F1F5" stroke-width="1.2"/><circle cx="17" cy="17" r="15.3" stroke="#C3C5CE" stroke-width="1.4"/><circle cx="17" cy="14.2" r="6.6" stroke="#C3C5CE" stroke-width="1.4"/><path d="M6 27.5C8.3 23.2 12.4 21 17 21s8.7 2.2 11 6.5" stroke="#C3C5CE" stroke-width="1.4"/></svg>
<svg class="a" style="left:1165px;top:527.5px;" width="34" height="34" viewBox="0 0 34 34" fill="none"><circle cx="17" cy="17" r="16.2" fill="#fff" stroke="#F0F1F5" stroke-width="1.2"/><circle cx="17" cy="17" r="15.3" stroke="#C3C5CE" stroke-width="1.4"/><circle cx="17" cy="14.2" r="6.6" stroke="#C3C5CE" stroke-width="1.4"/><path d="M6 27.5C8.3 23.2 12.4 21 17 21s8.7 2.2 11 6.5" stroke="#C3C5CE" stroke-width="1.4"/></svg>
<div class="a" style="left:1243px;top:523px;width:291px;height:43px;background:#F0AE53"></div>
<span class="t" style="left:1337.95px;top:537.00px;font-size:17px;color:#fff;letter-spacing:0.169px;-webkit-text-stroke:0.2px #fff;">Working on it</span>
<div class="a" style="left:1545px;top:531px;width:104px;height:27px;border:3px solid #2A7A43;border-radius:3px;box-sizing:border-box"></div>
<span class="t" style="left:1671.80px;top:537.00px;font-size:17px;color:#323338;letter-spacing:-0.589px;">0%</span>
<svg class="a" style="left:1715.2px;top:536px;" width="20" height="20" viewBox="0 0 20 20" fill="none"><circle cx="10" cy="10" r="8.3" fill="#676879"/><path d="M10 3.2v4" stroke="#D8D9E0" stroke-width="1.3" stroke-linecap="round"/></svg>
<span class="t" style="left:1774.25px;top:537.00px;font-size:17px;color:#323338;letter-spacing:-0.565px;">Sep 12</span>
<div class="a" style="left:108px;top:610px;width:1924px;height:2px;background:#D6D9E7"></div>
<div class="a" style="left:147px;top:566px;width:2px;height:46px;background:#D6D9E7"></div>
<div class="a" style="left:100px;top:566px;width:8px;height:45px;background:#F29CC3;border-bottom-left-radius:7px"></div>
<div class="a" style="left:118px;top:579px;width:19px;height:19px;border:1.5px solid #E6E8F0;border-radius:3px;box-sizing:border-box"></div>
<span class="t" style="left:191.30px;top:581.00px;font-size:17px;color:#676879;letter-spacing:0.279px;">+ Add item</span>
<div class="a" style="left:100px;top:612px;width:497px;height:12px;background:linear-gradient(180deg,rgba(60,65,90,0.035),rgba(60,65,90,0))"></div>
<div class="a" style="left:596px;top:610px;width:1436px;height:47px;border-left:2px solid #D6D9E7;border-bottom:2px solid #D6D9E7;border-bottom-left-radius:8px;box-sizing:border-box;box-shadow:0 5px 8px -3px rgba(40,45,80,0.06)"></div>
<div class="a" style="left:736px;top:610px;width:2px;height:46px;background:#D6D9E7"></div>
<div class="a" style="left:856px;top:610px;width:2px;height:46px;background:#D6D9E7"></div>
<div class="a" style="left:1001px;top:610px;width:2px;height:46px;background:#D6D9E7"></div>
<div class="a" style="left:1121px;top:610px;width:2px;height:46px;background:#D6D9E7"></div>
<div class="a" style="left:1242px;top:610px;width:2px;height:46px;background:#D6D9E7"></div>
<div class="a" style="left:1533px;top:610px;width:2px;height:46px;background:#D6D9E7"></div>
<div class="a" style="left:1705px;top:610px;width:2px;height:46px;background:#D6D9E7"></div>
<div class="a" style="left:1892px;top:610px;width:2px;height:46px;background:#D6D9E7"></div>
<span class="t" style="left:646.68px;top:625.00px;font-size:17px;color:#323338;letter-spacing:5.5px;">2/2</span>
<svg class="a" style="left:912.4px;top:616px;" width="34" height="34" viewBox="0 0 34 34" fill="none"><circle cx="17" cy="17" r="16.2" fill="#fff" stroke="#F0F1F5" stroke-width="1.2"/><circle cx="17" cy="17" r="15.3" stroke="#C3C5CE" stroke-width="1.4"/><circle cx="17" cy="14.2" r="6.6" stroke="#C3C5CE" stroke-width="1.4"/><path d="M6 27.5C8.3 23.2 12.4 21 17 21s8.7 2.2 11 6.5" stroke="#C3C5CE" stroke-width="1.4"/></svg>
<svg class="a" style="left:1044.8px;top:616px;" width="34" height="34" viewBox="0 0 34 34" fill="none"><circle cx="17" cy="17" r="16.2" fill="#fff" stroke="#F0F1F5" stroke-width="1.2"/><circle cx="17" cy="17" r="15.3" stroke="#C3C5CE" stroke-width="1.4"/><circle cx="17" cy="14.2" r="6.6" stroke="#C3C5CE" stroke-width="1.4"/><path d="M6 27.5C8.3 23.2 12.4 21 17 21s8.7 2.2 11 6.5" stroke="#C3C5CE" stroke-width="1.4"/></svg>
<svg class="a" style="left:1165px;top:616px;" width="34" height="34" viewBox="0 0 34 34" fill="none"><circle cx="17" cy="17" r="16.2" fill="#fff" stroke="#F0F1F5" stroke-width="1.2"/><circle cx="17" cy="17" r="15.3" stroke="#C3C5CE" stroke-width="1.4"/><circle cx="17" cy="14.2" r="6.6" stroke="#C3C5CE" stroke-width="1.4"/><path d="M6 27.5C8.3 23.2 12.4 21 17 21s8.7 2.2 11 6.5" stroke="#C3C5CE" stroke-width="1.4"/></svg>
<div class="a" style="left:1253px;top:619px;width:135.5px;height:29px;background:#5CC57D"></div>
<div class="a" style="left:1388.5px;top:619px;width:135.5px;height:29px;background:#F0AE53"></div>
<div class="a" style="left:1545px;top:619.5px;width:104px;height:27px;border:3px solid #2A7A43;border-radius:3px;box-sizing:border-box"></div>
<span class="t" style="left:1671.80px;top:625.00px;font-size:17px;color:#323338;letter-spacing:-0.589px;">0%</span>
<svg class="a" style="left:118px;top:709.8px;" width="17" height="12" viewBox="0 0 17 12" fill="none"><path d="M2 2.5l6.5 6.5 6.5-6.5" stroke="#9DCF45" stroke-width="2" stroke-linecap="round" stroke-linejoin="round"/></svg>
<span class="t" style="left:150.80px;top:701.30px;font-size:22.7px;color:#9DCF45;letter-spacing:0.389px;-webkit-text-stroke:0.6px #9DCF45;">Project Phase 2</span>
<div class="a" style="left:108px;top:739px;width:1924px;height:2px;background:#D6D9E7"></div>
<div class="a" style="left:108px;top:782px;width:1924px;height:2px;background:#D6D9E7"></div>
<div class="a" style="left:147px;top:739px;width:2px;height:45px;background:#D6D9E7"></div>
<div class="a" style="left:596px;top:739px;width:2px;height:45px;background:#D6D9E7"></div>
<div class="a" style="left:736px;top:739px;width:2px;height:45px;background:#D6D9E7"></div>
<div class="a" style="left:856px;top:739px;width:2px;height:45px;background:#D6D9E7"></div>
<div class="a" style="left:1001px;top:739px;width:2px;height:45px;background:#D6D9E7"></div>
<div class="a" style="left:1121px;top:739px;width:2px;height:45px;background:#D6D9E7"></div>
<div class="a" style="left:1242px;top:739px;width:2px;height:45px;background:#D6D9E7"></div>
<div class="a" style="left:1533px;top:739px;width:2px;height:45px;background:#D6D9E7"></div>
<div class="a" style="left:1705px;top:739px;width:2px;height:45px;background:#D6D9E7"></div>
<div class="a" style="left:1892px;top:739px;width:2px;height:45px;background:#D6D9E7"></div>
<div class="a" style="left:100px;top:739px;width:8px;height:45px;background:#9DCF45;border-top-left-radius:7px"></div>
<div class="a" style="left:118px;top:751.5px;width:19px;height:19px;border:1.5px solid #C5C8D6;border-radius:3px;box-sizing:border-box"></div>
<span class="t" style="left:355.70px;top:753.00px;font-size:17px;color:#323338;letter-spacing:0.184px;">Item</span>
<span class="t" style="left:604.40px;top:753.00px;font-size:17px;color:#323338;letter-spacing:-0.193px;">Ready to Star...</span>
<span class="t" style="left:752.00px;top:753.00px;font-size:17px;color:#323338;letter-spacing:-0.739px;">Respo...</span>
<svg class="a" style="left:825px;top:752.5px;" width="16" height="16" viewBox="0 0 16 16" fill="none"><circle cx="8" cy="8" r="6.8" stroke="#676879" stroke-width="1.4"/><path d="M8 7v4.5" stroke="#676879" stroke-width="1.6" stroke-linecap="round"/><circle cx="8" cy="4.8" r="0.95" fill="#676879"/></svg>
<span class="t" style="left:871.50px;top:753.00px;font-size:17px;color:#323338;letter-spacing:-0.021px;">Account...</span>
<svg class="a" style="left:970px;top:752.5px;" width="16" height="16" viewBox="0 0 16 16" fill="none"><circle cx="8" cy="8" r="6.8" stroke="#676879" stroke-width="1.4"/><path d="M8 7v4.5" stroke="#676879" stroke-width="1.6" stroke-linecap="round"/><circle cx="8" cy="4.8" r="0.95" fill="#676879"/></svg>
<span class="t" style="left:1016.40px;top:753.00px;font-size:17px;color:#323338;letter-spacing:-0.502px;">Consu...</span>
<svg class="a" style="left:1090.4px;top:752.5px;" width="16" height="16" viewBox="0 0 16 16" fill="none"><circle cx="8" cy="8" r="6.8" stroke="#676879" stroke-width="1.4"/><path d="M8 7v4.5" stroke="#676879" stroke-width="1.6" stroke-linecap="round"/><circle cx="8" cy="4.8" r="0.95" fill="#676879"/></svg>
<span class="t" style="left:1137.00px;top:753.00px;font-size:17px;color:#323338;letter-spacing:-0.219px;">Infor...</span>
<svg class="a" style="left:1210px;top:752.5px;" width="16" height="16" viewBox="0 0 16 16" fill="none"><circle cx="8" cy="8" r="6.8" stroke="#676879" stroke-width="1.4"/><path d="M8 7v4.5" stroke="#676879" stroke-width="1.6" stroke-linecap="round"/><circle cx="8" cy="4.8" r="0.95" fill="#676879"/></svg>
<span class="t" style="left:1268.00px;top:753.00px;font-size:17px;color:#323338;letter-spacing:0.191px;">Status of the Delivarble/Task</span>
<svg class="a" style="left:1502.5px;top:752.5px;" width="16" height="16" viewBox="0 0 16 16" fill="none"><circle cx="8" cy="8" r="6.8" stroke="#676879" stroke-width="1.4"/><path d="M8 7v4.5" stroke="#676879" stroke-width="1.6" stroke-linecap="round"/><circle cx="8" cy="4.8" r="0.95" fill="#676879"/></svg>
<span class="t" style="left:1587.70px;top:753.00px;font-size:17px;color:#323338;letter-spacing:-0.266px;">Progress</span>
<svg class="a" style="left:1673.3px;top:752.0px;" width="18" height="17" viewBox="0 0 18 17" fill="none"><path d="M9 1.8L16.8 15.2H1.2z" stroke="#D83A52" stroke-width="1.6" stroke-linejoin="round"/><path d="M9 6.5v4" stroke="#D83A52" stroke-width="1.7" stroke-linecap="round"/><circle cx="9" cy="12.8" r="0.95" fill="#D83A52"/></svg>
<span class="t" style="left:1731.00px;top:753.00px;font-size:17px;color:#323338;letter-spacing:-0.235px;">Task's Deadline</span>
<svg class="a" style="left:1860.6px;top:752.5px;" width="16" height="16" viewBox="0 0 16 16" fill="none"><circle cx="8" cy="8" r="6.8" stroke="#676879" stroke-width="1.4"/><path d="M8 7v4.5" stroke="#676879" stroke-width="1.6" stroke-linecap="round"/><circle cx="8" cy="4.8" r="0.95" fill="#676879"/></svg>
<svg class="a" style="left:1907.6px;top:752.5px;" width="18" height="18" viewBox="0 0 18 18" fill="none"><path d="M9 1v16M1 9h16" stroke="#676879" stroke-width="1.5"/></svg>
<div class="a" style="left:108px;top:826px;width:1924px;height:2px;background:#D6D9E7"></div>
<div class="a" style="left:147px;top:782px;width:2px;height:46px;background:#D6D9E7"></div>
<div class="a" style="left:474px;top:782px;width:2px;height:46px;background:#D6D9E7"></div>
<div class="a" style="left:596px;top:782px;width:2px;height:46px;background:#D6D9E7"></div>
<div class="a" style="left:736px;top:782px;width:2px;height:46px;background:#D6D9E7"></div>
<div class="a" style="left:856px;top:782px;width:2px;height:46px;background:#D6D9E7"></div>
<div class="a" style="left:1001px;top:782px;width:2px;height:46px;background:#D6D9E7"></div>
<div class="a" style="left:1121px;top:782px;width:2px;height:46px;background:#D6D9E7"></div>
<div class="a" style="left:1242px;top:782px;width:2px;height:46px;background:#D6D9E7"></div>
<div class="a" style="left:1533px;top:782px;width:2px;height:46px;background:#D6D9E7"></div>
<div class="a" style="left:1705px;top:782px;width:2px;height:46px;background:#D6D9E7"></div>
<div class="a" style="left:1892px;top:782px;width:2px;height:46px;background:#D6D9E7"></div>
<div class="a" style="left:100px;top:782px;width:8px;height:44px;background:#9DCF45"></div>
<div class="a" style="left:118px;top:795px;width:19px;height:19px;border:1.5px solid #C5C8D6;border-radius:3px;box-sizing:border-box"></div>
<span class="t" style="left:191.30px;top:797.00px;font-size:17px;color:#323338;letter-spacing:-0.267px;">Deliverable/Task 1</span>
<svg class="a" style="left:502.20000000000005px;top:791.5px;" width="24" height="24" viewBox="0 0 24 24" fill="none"><path d="M11.2 2.6Q12 0.6 12.8 2.6L15.1 8.7 21.2 11.2Q23.2 12 21.2 12.8L15.1 15.3 12.8 21.2Q12 23.2 11.2 21.2L8.9 15.3 2.8 12.8Q0.8 12 2.8 11.2L8.9 8.7Z" stroke="#676879" stroke-width="1.8" stroke-linejoin="round"/></svg>
<svg class="a" style="left:544.4px;top:791.2px;" width="24" height="24" viewBox="0 0 24 24" fill="none"><path d="M4.5 20.5l1-3.5a9.3 9.3 0 1 1 3.3 2.8z" stroke="#676879" stroke-width="1.7" stroke-linejoin="round"/><path d="M13 8v8M9 12h8" stroke="#676879" stroke-width="1.7" stroke-linecap="round"/></svg>
<svg class="a" style="left:654px;top:797.5px;" width="18" height="14" viewBox="0 0 18 14" fill="none"><path d="M2 7l5 5L16 2" stroke="#5AC46F" stroke-width="2" stroke-linecap="round" stroke-linejoin="round"/></svg>
<svg class="a" style="left:779.9px;top:787.5px;" width="34" height="34" viewBox="0 0 34 34" fill="none"><circle cx="17" cy="17" r="16.2" fill="#fff" stroke="#F0F1F5" stroke-width="1.2"/><circle cx="17" cy="17" r="15.3" stroke="#C3C5CE" stroke-width="1.4"/><circle cx="17" cy="14.2" r="6.6" stroke="#C3C5CE" stroke-width="1.4"/><path d="M6 27.5C8.3 23.2 12.4 21 17 21s8.7 2.2 11 6.5" stroke="#C3C5CE" stroke-width="1.4"/></svg>
<svg class="a" style="left:912.4px;top:787.5px;" width="34" height="34" viewBox="0 0 34 34" fill="none"><circle cx="17" cy="17" r="16.2" fill="#fff" stroke="#F0F1F5" stroke-width="1.2"/><circle cx="17" cy="17" r="15.3" stroke="#C3C5CE" stroke-width="1.4"/><circle cx="17" cy="14.2" r="6.6" stroke="#C3C5CE" stroke-width="1.4"/><path d="M6 27.5C8.3 23.2 12.4 21 17 21s8.7 2.2 11 6.5" stroke="#C3C5CE" stroke-width="1.4"/></svg>
<svg class="a" style="left:1044.8px;top:787.5px;" width="34" height="34" viewBox="0 0 34 34" fill="none"><circle cx="17" cy="17" r="16.2" fill="#fff" stroke="#F0F1F5" stroke-width="1.2"/><circle cx="17" cy="17" r="15.3" stroke="#C3C5CE" stroke-width="1.4"/><circle cx="17" cy="14.2" r="6.6" stroke="#C3C5CE" stroke-width="1.4"/><path d="M6 27.5C8.3 23.2 12.4 21 17 21s8.7 2.2 11 6.5" stroke="#C3C5CE" stroke-width="1.4"/></svg>
<svg class="a" style="left:1165px;top:787.5px;" width="34" height="34" viewBox="0 0 34 34" fill="none"><circle cx="17" cy="17" r="16.2" fill="#fff" stroke="#F0F1F5" stroke-width="1.2"/><circle cx="17" cy="17" r="15.3" stroke="#C3C5CE" stroke-width="1.4"/><circle cx="17" cy="14.2" r="6.6" stroke="#C3C5CE" stroke-width="1.4"/><path d="M6 27.5C8.3 23.2 12.4 21 17 21s8.7 2.2 11 6.5" stroke="#C3C5CE" stroke-width="1.4"/></svg>
<div class="a" style="left:1243px;top:783px;width:291px;height:43px;background:#3A7DB5"></div>
<span class="t" style="left:1345.25px;top:797.00px;font-size:17px;color:#fff;letter-spacing:0.304px;-webkit-text-stroke:0.2px #fff;">Not started</span>
<div class="a" style="left:1545px;top:791px;width:104px;height:27px;border:3px solid #2A7A43;border-radius:3px;box-sizing:border-box"></div>
<span class="t" style="left:1671.80px;top:797.00px;font-size:17px;color:#323338;letter-spacing:-0.589px;">0%</span>
<svg class="a" style="left:1715.2px;top:796px;" width="20" height="20" viewBox="0 0 20 20" fill="none"><circle cx="10" cy="10" r="7.4" fill="#fff" stroke="#676879" stroke-width="1.8"/><path d="M10 10V2.5999999999999996A7.4 7.4 0 1 1 3.59 13.70z" fill="#676879"/></svg>
<span class="t" style="left:1774.25px;top:797.00px;font-size:17px;color:#323338;letter-spacing:-0.565px;">Sep 14</span>
<div class="a" style="left:108px;top:870px;width:1924px;height:2px;background:#D6D9E7"></div>
<div class="a" style="left:147px;top:826px;width:2px;height:46px;background:#D6D9E7"></div>
<div class="a" style="left:474px;top:826px;width:2px;height:46px;background:#D6D9E7"></div>
<div class="a" style="left:596px;top:826px;width:2px;height:46px;background:#D6D9E7"></div>
<div class="a" style="left:736px;top:826px;width:2px;height:46px;background:#D6D9E7"></div>
<div class="a" style="left:856px;top:826px;width:2px;height:46px;background:#D6D9E7"></div>
<div class="a" style="left:1001px;top:826px;width:2px;height:46px;background:#D6D9E7"></div>
<div class="a" style="left:1121px;top:826px;width:2px;height:46px;background:#D6D9E7"></div>
<div class="a" style="left:1242px;top:826px;width:2px;height:46px;background:#D6D9E7"></div>
<div class="a" style="left:1533px;top:826px;width:2px;height:46px;background:#D6D9E7"></div>
<div class="a" style="left:1705px;top:826px;width:2px;height:46px;background:#D6D9E7"></div>
<div class="a" style="left:1892px;top:826px;width:2px;height:46px;background:#D6D9E7"></div>
<div class="a" style="left:100px;top:826px;width:8px;height:44px;background:#9DCF45"></div>
<div class="a" style="left:118px;top:839px;width:19px;height:19px;border:1.5px solid #C5C8D6;border-radius:3px;box-sizing:border-box"></div>
<span class="t" style="left:191.30px;top:841.00px;font-size:17px;color:#323338;letter-spacing:-0.267px;">Deliverable/Task 2</span>
<svg class="a" style="left:502.20000000000005px;top:835.5px;" width="24" height="24" viewBox="0 0 24 24" fill="none"><path d="M11.2 2.6Q12 0.6 12.8 2.6L15.1 8.7 21.2 11.2Q23.2 12 21.2 12.8L15.1 15.3 12.8 21.2Q12 23.2 11.2 21.2L8.9 15.3 2.8 12.8Q0.8 12 2.8 11.2L8.9 8.7Z" stroke="#676879" stroke-width="1.8" stroke-linejoin="round"/></svg>
<svg class="a" style="left:544.4px;top:835.2px;" width="24" height="24" viewBox="0 0 24 24" fill="none"><path d="M4.5 20.5l1-3.5a9.3 9.3 0 1 1 3.3 2.8z" stroke="#676879" stroke-width="1.7" stroke-linejoin="round"/><path d="M13 8v8M9 12h8" stroke="#676879" stroke-width="1.7" stroke-linecap="round"/></svg>
<svg class="a" style="left:779.9px;top:831.5px;" width="34" height="34" viewBox="0 0 34 34" fill="none"><circle cx="17" cy="17" r="16.2" fill="#fff" stroke="#F0F1F5" stroke-width="1.2"/><circle cx="17" cy="17" r="15.3" stroke="#C3C5CE" stroke-width="1.4"/><circle cx="17" cy="14.2" r="6.6" stroke="#C3C5CE" stroke-width="1.4"/><path d="M6 27.5C8.3 23.2 12.4 21 17 21s8.7 2.2 11 6.5" stroke="#C3C5CE" stroke-width="1.4"/></svg>
<svg class="a" style="left:912.4px;top:831.5px;" width="34" height="34" viewBox="0 0 34 34" fill="none"><circle cx="17" cy="17" r="16.2" fill="#fff" stroke="#F0F1F5" stroke-width="1.2"/><circle cx="17" cy="17" r="15.3" stroke="#C3C5CE" stroke-width="1.4"/><circle cx="17" cy="14.2" r="6.6" stroke="#C3C5CE" stroke-width="1.4"/><path d="M6 27.5C8.3 23.2 12.4 21 17 21s8.7 2.2 11 6.5" stroke="#C3C5CE" stroke-width="1.4"/></svg>
<svg class="a" style="left:1044.8px;top:831.5px;" width="34" height="34" viewBox="0 0 34 34" fill="none"><circle cx="17" cy="17" r="16.2" fill="#fff" stroke="#F0F1F5" stroke-width="1.2"/><circle cx="17" cy="17" r="15.3" stroke="#C3C5CE" stroke-width="1.4"/><circle cx="17" cy="14.2" r="6.6" stroke="#C3C5CE" stroke-width="1.4"/><path d="M6 27.5C8.3 23.2 12.4 21 17 21s8.7 2.2 11 6.5" stroke="#C3C5CE" stroke-width="1.4"/></svg>
<svg class="a" style="left:1165px;top:831.5px;" width="34" height="34" viewBox="0 0 34 34" fill="none"><circle cx="17" cy="17" r="16.2" fill="#fff" stroke="#F0F1F5" stroke-width="1.2"/><circle cx="17" cy="17" r="15.3" stroke="#C3C5CE" stroke-width="1.4"/><circle cx="17" cy="14.2" r="6.6" stroke="#C3C5CE" stroke-width="1.4"/><path d="M6 27.5C8.3 23.2 12.4 21 17 21s8.7 2.2 11 6.5" stroke="#C3C5CE" stroke-width="1.4"/></svg>
<div class="a" style="left:1243px;top:827px;width:291px;height:43px;background:#3A7DB5"></div>
<span class="t" style="left:1345.25px;top:841.00px;font-size:17px;color:#fff;letter-spacing:0.304px;-webkit-text-stroke:0.2px #fff;">Not started</span>
<div class="a" style="left:1545px;top:835px;width:104px;height:27px;border:3px solid #2A7A43;border-radius:3px;box-sizing:border-box"></div>
<span class="t" style="left:1671.80px;top:841.00px;font-size:17px;color:#323338;letter-spacing:-0.589px;">0%</span>
<svg class="a" style="left:1715.2px;top:840px;" width="20" height="20" viewBox="0 0 20 20" fill="none"><circle cx="10" cy="10" r="7.4" fill="#fff" stroke="#676879" stroke-width="1.8"/><path d="M10 10V2.5999999999999996A7.4 7.4 0 0 1 14.76 15.67z" fill="#676879"/></svg>
<span class="t" style="left:1774.25px;top:841.00px;font-size:17px;color:#323338;letter-spacing:-0.565px;">Sep 16</span>
<div class="a" style="left:108px;top:914px;width:1924px;height:2px;background:#D6D9E7"></div>
<div class="a" style="left:147px;top:870px;width:2px;height:46px;background:#D6D9E7"></div>
<div class="a" style="left:100px;top:870px;width:8px;height:45px;background:#D2E8A8;border-bottom-left-radius:7px"></div>
<div class="a" style="left:118px;top:883px;width:19px;height:19px;border:1.5px solid #E6E8F0;border-radius:3px;box-sizing:border-box"></div>
<span class="t" style="left:191.30px;top:885.00px;font-size:17px;color:#676879;letter-spacing:0.279px;">+ Add item</span>
<div class="a" style="left:100px;top:916px;width:497px;height:12px;background:linear-gradient(180deg,rgba(60,65,90,0.035),rgba(60,65,90,0))"></div>
<div class="a" style="left:596px;top:914px;width:1436px;height:47px;border-left:2px solid #D6D9E7;border-bottom:2px solid #D6D9E7;border-bottom-left-radius:8px;box-sizing:border-box;box-shadow:0 5px 8px -3px rgba(40,45,80,0.06)"></div>
<div class="a" style="left:736px;top:914px;width:2px;height:46px;background:#D6D9E7"></div>
<div class="a" style="left:856px;top:914px;width:2px;height:46px;background:#D6D9E7"></div>
<div class="a" style="left:1001px;top:914px;width:2px;height:46px;background:#D6D9E7"></div>
<div class="a" style="left:1121px;top:914px;width:2px;height:46px;background:#D6D9E7"></div>
<div class="a" style="left:1242px;top:914px;width:2px;height:46px;background:#D6D9E7"></div>
<div class="a" style="left:1533px;top:914px;width:2px;height:46px;background:#D6D9E7"></div>
<div class="a" style="left:1705px;top:914px;width:2px;height:46px;background:#D6D9E7"></div>
<div class="a" style="left:1892px;top:914px;width:2px;height:46px;background:#D6D9E7"></div>
<span class="t" style="left:646.68px;top:929.00px;font-size:17px;color:#323338;letter-spacing:5.5px;">1/2</span>
<svg class="a" style="left:912.4px;top:920px;" width="34" height="34" viewBox="0 0 34 34" fill="none"><circle cx="17" cy="17" r="16.2" fill="#fff" stroke="#F0F1F5" stroke-width="1.2"/><circle cx="17" cy="17" r="15.3" stroke="#C3C5CE" stroke-width="1.4"/><circle cx="17" cy="14.2" r="6.6" stroke="#C3C5CE" stroke-width="1.4"/><path d="M6 27.5C8.3 23.2 12.4 21 17 21s8.7 2.2 11 6.5" stroke="#C3C5CE" stroke-width="1.4"/></svg>
<svg class="a" style="left:1044.8px;top:920px;" width="34" height="34" viewBox="0 0 34 34" fill="none"><circle cx="17" cy="17" r="16.2" fill="#fff" stroke="#F0F1F5" stroke-width="1.2"/><circle cx="17" cy="17" r="15.3" stroke="#C3C5CE" stroke-width="1.4"/><circle cx="17" cy="14.2" r="6.6" stroke="#C3C5CE" stroke-width="1.4"/><path d="M6 27.5C8.3 23.2 12.4 21 17 21s8.7 2.2 11 6.5" stroke="#C3C5CE" stroke-width="1.4"/></svg>
<svg class="a" style="left:1165px;top:920px;" width="34" height="34" viewBox="0 0 34 34" fill="none"><circle cx="17" cy="17" r="16.2" fill="#fff" stroke="#F0F1F5" stroke-width="1.2"/><circle cx="17" cy="17" r="15.3" stroke="#C3C5CE" stroke-width="1.4"/><circle cx="17" cy="14.2" r="6.6" stroke="#C3C5CE" stroke-width="1.4"/><path d="M6 27.5C8.3 23.2 12.4 21 17 21s8.7 2.2 11 6.5" stroke="#C3C5CE" stroke-width="1.4"/></svg>
<div class="a" style="left:1253px;top:923px;width:271px;height:29px;background:#3A7DB5"></div>
<div class="a" style="left:1545px;top:923.5px;width:104px;height:27px;border:3px solid #2A7A43;border-radius:3px;box-sizing:border-box"></div>
<span class="t" style="left:1671.80px;top:929.00px;font-size:17px;color:#323338;letter-spacing:-0.589px;">0%</span>
<svg class="a" style="left:118px;top:1013.8px;" width="17" height="12" viewBox="0 0 17 12" fill="none"><path d="M2 2.5l6.5 6.5 6.5-6.5" stroke="#74C4F7" stroke-width="2" stroke-linecap="round" stroke-linejoin="round"/></svg>
<span class="t" style="left:150.80px;top:1005.30px;font-size:22.7px;color:#74C4F7;letter-spacing:0.389px;-webkit-text-stroke:0.6px #74C4F7;">Project Phase 3</span>
<div class="a" style="left:108px;top:1043px;width:1924px;height:2px;background:#D6D9E7"></div>
<div class="a" style="left:108px;top:1086px;width:1924px;height:2px;background:#D6D9E7"></div>
<div class="a" style="left:147px;top:1043px;width:2px;height:45px;background:#D6D9E7"></div>
<div class="a" style="left:596px;top:1043px;width:2px;height:45px;background:#D6D9E7"></div>
<div class="a" style="left:736px;top:1043px;width:2px;height:45px;background:#D6D9E7"></div>
<div class="a" style="left:856px;top:1043px;width:2px;height:45px;background:#D6D9E7"></div>
<div class="a" style="left:1001px;top:1043px;width:2px;height:45px;background:#D6D9E7"></div>
<div class="a" style="left:1121px;top:1043px;width:2px;height:45px;background:#D6D9E7"></div>
<div class="a" style="left:1242px;top:1043px;width:2px;height:45px;background:#D6D9E7"></div>
<div class="a" style="left:1533px;top:1043px;width:2px;height:45px;background:#D6D9E7"></div>
<div class="a" style="left:1705px;top:1043px;width:2px;height:45px;background:#D6D9E7"></div>
<div class="a" style="left:1892px;top:1043px;width:2px;height:45px;background:#D6D9E7"></div>
<div class="a" style="left:100px;top:1043px;width:8px;height:45px;background:#74C4F7;border-top-left-radius:7px"></div>
<div class="a" style="left:118px;top:1055.5px;width:19px;height:19px;border:1.5px solid #C5C8D6;border-radius:3px;box-sizing:border-box"></div>
<span class="t" style="left:355.70px;top:1057.00px;font-size:17px;color:#323338;letter-spacing:0.184px;">Item</span>
<span class="t" style="left:604.40px;top:1057.00px;font-size:17px;color:#323338;letter-spacing:-0.193px;">Ready to Star...</span>
<span class="t" style="left:752.00px;top:1057.00px;font-size:17px;color:#323338;letter-spacing:-0.739px;">Respo...</span>
<svg class="a" style="left:825px;top:1056.5px;" width="16" height="16" viewBox="0 0 16 16" fill="none"><circle cx="8" cy="8" r="6.8" stroke="#676879" stroke-width="1.4"/><path d="M8 7v4.5" stroke="#676879" stroke-width="1.6" stroke-linecap="round"/><circle cx="8" cy="4.8" r="0.95" fill="#676879"/></svg>
<span class="t" style="left:871.50px;top:1057.00px;font-size:17px;color:#323338;letter-spacing:-0.021px;">Account...</span>
<svg class="a" style="left:970px;top:1056.5px;" width="16" height="16" viewBox="0 0 16 16" fill="none"><circle cx="8" cy="8" r="6.8" stroke="#676879" stroke-width="1.4"/><path d="M8 7v4.5" stroke="#676879" stroke-width="1.6" stroke-linecap="round"/><circle cx="8" cy="4.8" r="0.95" fill="#676879"/></svg>
<span class="t" style="left:1016.40px;top:1057.00px;font-size:17px;color:#323338;letter-spacing:-0.502px;">Consu...</span>
<svg class="a" style="left:1090.4px;top:1056.5px;" width="16" height="16" viewBox="0 0 16 16" fill="none"><circle cx="8" cy="8" r="6.8" stroke="#676879" stroke-width="1.4"/><path d="M8 7v4.5" stroke="#676879" stroke-width="1.6" stroke-linecap="round"/><circle cx="8" cy="4.8" r="0.95" fill="#676879"/></svg>
<span class="t" style="left:1137.00px;top:1057.00px;font-size:17px;color:#323338;letter-spacing:-0.219px;">Infor...</span>
<svg class="a" style="left:1210px;top:1056.5px;" width="16" height="16" viewBox="0 0 16 16" fill="none"><circle cx="8" cy="8" r="6.8" stroke="#676879" stroke-width="1.4"/><path d="M8 7v4.5" stroke="#676879" stroke-width="1.6" stroke-linecap="round"/><circle cx="8" cy="4.8" r="0.95" fill="#676879"/></svg>
<span class="t" style="left:1268.00px;top:1057.00px;font-size:17px;color:#323338;letter-spacing:0.191px;">Status of the Delivarble/Task</span>
<svg class="a" style="left:1502.5px;top:1056.5px;" width="16" height="16" viewBox="0 0 16 16" fill="none"><circle cx="8" cy="8" r="6.8" stroke="#676879" stroke-width="1.4"/><path d="M8 7v4.5" stroke="#676879" stroke-width="1.6" stroke-linecap="round"/><circle cx="8" cy="4.8" r="0.95" fill="#676879"/></svg>
<span class="t" style="left:1587.70px;top:1057.00px;font-size:17px;color:#323338;letter-spacing:-0.266px;">Progress</span>
<svg class="a" style="left:1673.3px;top:1056.0px;" width="18" height="17" viewBox="0 0 18 17" fill="none"><path d="M9 1.8L16.8 15.2H1.2z" stroke="#D83A52" stroke-width="1.6" stroke-linejoin="round"/><path d="M9 6.5v4" stroke="#D83A52" stroke-width="1.7" stroke-linecap="round"/><circle cx="9" cy="12.8" r="0.95" fill="#D83A52"/></svg>
<span class="t" style="left:1731.00px;top:1057.00px;font-size:17px;color:#323338;letter-spacing:-0.235px;">Task's Deadline</span>
<svg class="a" style="left:1860.6px;top:1056.5px;" width="16" height="16" viewBox="0 0 16 16" fill="none"><circle cx="8" cy="8" r="6.8" stroke="#676879" stroke-width="1.4"/><path d="M8 7v4.5" stroke="#676879" stroke-width="1.6" stroke-linecap="round"/><circle cx="8" cy="4.8" r="0.95" fill="#676879"/></svg>
<svg class="a" style="left:1907.6px;top:1056.5px;" width="18" height="18" viewBox="0 0 18 18" fill="none"><path d="M9 1v16M1 9h16" stroke="#676879" stroke-width="1.5"/></svg>
<div class="a" style="left:108px;top:1130px;width:1924px;height:2px;background:#D6D9E7"></div>
<div class="a" style="left:147px;top:1086px;width:2px;height:46px;background:#D6D9E7"></div>
<div class="a" style="left:474px;top:1086px;width:2px;height:46px;background:#D6D9E7"></div>
<div class="a" style="left:596px;top:1086px;width:2px;height:46px;background:#D6D9E7"></div>
<div class="a" style="left:736px;top:1086px;width:2px;height:46px;background:#D6D9E7"></div>
<div class="a" style="left:856px;top:1086px;width:2px;height:46px;background:#D6D9E7"></div>
<div class="a" style="left:1001px;top:1086px;width:2px;height:46px;background:#D6D9E7"></div>
<div class="a" style="left:1121px;top:1086px;width:2px;height:46px;background:#D6D9E7"></div>
<div class="a" style="left:1242px;top:1086px;width:2px;height:46px;background:#D6D9E7"></div>
<div class="a" style="left:1533px;top:1086px;width:2px;height:46px;background:#D6D9E7"></div>
<div class="a" style="left:1705px;top:1086px;width:2px;height:46px;background:#D6D9E7"></div>
<div class="a" style="left:1892px;top:1086px;width:2px;height:46px;background:#D6D9E7"></div>
<div class="a" style="left:100px;top:1086px;width:8px;height:44px;background:#74C4F7"></div>
<div class="a" style="left:118px;top:1099px;width:19px;height:19px;border:1.5px solid #C5C8D6;border-radius:3px;box-sizing:border-box"></div>
<span class="t" style="left:191.30px;top:1101.00px;font-size:17px;color:#323338;letter-spacing:-0.267px;">Deliverable/Task 1</span>
<svg class="a" style="left:502.20000000000005px;top:1095.5px;" width="24" height="24" viewBox="0 0 24 24" fill="none"><path d="M11.2 2.6Q12 0.6 12.8 2.6L15.1 8.7 21.2 11.2Q23.2 12 21.2 12.8L15.1 15.3 12.8 21.2Q12 23.2 11.2 21.2L8.9 15.3 2.8 12.8Q0.8 12 2.8 11.2L8.9 8.7Z" stroke="#676879" stroke-width="1.8" stroke-linejoin="round"/></svg>
<svg class="a" style="left:544.4px;top:1095.2px;" width="24" height="24" viewBox="0 0 24 24" fill="none"><path d="M4.5 20.5l1-3.5a9.3 9.3 0 1 1 3.3 2.8z" stroke="#676879" stroke-width="1.7" stroke-linejoin="round"/><path d="M13 8v8M9 12h8" stroke="#676879" stroke-width="1.7" stroke-linecap="round"/></svg>
<svg class="a" style="left:654px;top:1101.5px;" width="18" height="14" viewBox="0 0 18 14" fill="none"><path d="M2 7l5 5L16 2" stroke="#5AC46F" stroke-width="2" stroke-linecap="round" stroke-linejoin="round"/></svg>
<svg class="a" style="left:779.9px;top:1091.5px;" width="34" height="34" viewBox="0 0 34 34" fill="none"><circle cx="17" cy="17" r="16.2" fill="#fff" stroke="#F0F1F5" stroke-width="1.2"/><circle cx="17" cy="17" r="15.3" stroke="#C3C5CE" stroke-width="1.4"/><circle cx="17" cy="14.2" r="6.6" stroke="#C3C5CE" stroke-width="1.4"/><path d="M6 27.5C8.3 23.2 12.4 21 17 21s8.7 2.2 11 6.5" stroke="#C3C5CE" stroke-width="1.4"/></svg>
<svg class="a" style="left:912.4px;top:1091.5px;" width="34" height="34" viewBox="0 0 34 34" fill="none"><circle cx="17" cy="17" r="16.2" fill="#fff" stroke="#F0F1F5" stroke-width="1.2"/><circle cx="17" cy="17" r="15.3" stroke="#C3C5CE" stroke-width="1.4"/><circle cx="17" cy="14.2" r="6.6" stroke="#C3C5CE" stroke-width="1.4"/><path d="M6 27.5C8.3 23.2 12.4 21 17 21s8.7 2.2 11 6.5" stroke="#C3C5CE" stroke-width="1.4"/></svg>
<svg class="a" style="left:1044.8px;top:1091.5px;" width="34" height="34" viewBox="0 0 34 34" fill="none"><circle cx="17" cy="17" r="16.2" fill="#fff" stroke="#F0F1F5" stroke-width="1.2"/><circle cx="17" cy="17" r="15.3" stroke="#C3C5CE" stroke-width="1.4"/><circle cx="17" cy="14.2" r="6.6" stroke="#C3C5CE" stroke-width="1.4"/><path d="M6 27.5C8.3 23.2 12.4 21 17 21s8.7 2.2 11 6.5" stroke="#C3C5CE" stroke-width="1.4"/></svg>
<svg class="a" style="left:1165px;top:1091.5px;" width="34" height="34" viewBox="0 0 34 34" fill="none"><circle cx="17" cy="17" r="16.2" fill="#fff" stroke="#F0F1F5" stroke-width="1.2"/><circle cx="17" cy="17" r="15.3" stroke="#C3C5CE" stroke-width="1.4"/><circle cx="17" cy="14.2" r="6.6" stroke="#C3C5CE" stroke-width="1.4"/><path d="M6 27.5C8.3 23.2 12.4 21 17 21s8.7 2.2 11 6.5" stroke="#C3C5CE" stroke-width="1.4"/></svg>
<div class="a" style="left:1243px;top:1087px;width:291px;height:43px;background:#3A7DB5"></div>
<span class="t" style="left:1345.25px;top:1101.00px;font-size:17px;color:#fff;letter-spacing:0.304px;-webkit-text-stroke:0.2px #fff;">Not started</span>
<div class="a" style="left:1545px;top:1095px;width:104px;height:27px;border:3px solid #2A7A43;border-radius:3px;box-sizing:border-box"></div>
<span class="t" style="left:1671.80px;top:1101.00px;font-size:17px;color:#323338;letter-spacing:-0.589px;">0%</span>
<svg class="a" style="left:1715.2px;top:1100px;" width="20" height="20" viewBox="0 0 20 20" fill="none"><circle cx="10" cy="10" r="7.4" stroke="#C4C4C4" stroke-width="1.7"/></svg>
<span class="t" style="left:1774.25px;top:1101.00px;font-size:17px;color:#323338;letter-spacing:-0.565px;">Sep 18</span>
<div class="a" style="left:1937px;top:1070px;width:85px;height:41px;background:#3473E2;border-radius:21px;box-shadow:0 4px 10px rgba(0,0,0,0.15)"></div>
<span class="t" style="left:1956.50px;top:1080.50px;font-size:22px;color:#fff;letter-spacing:0.188px;">Help</span>
</body></html>
